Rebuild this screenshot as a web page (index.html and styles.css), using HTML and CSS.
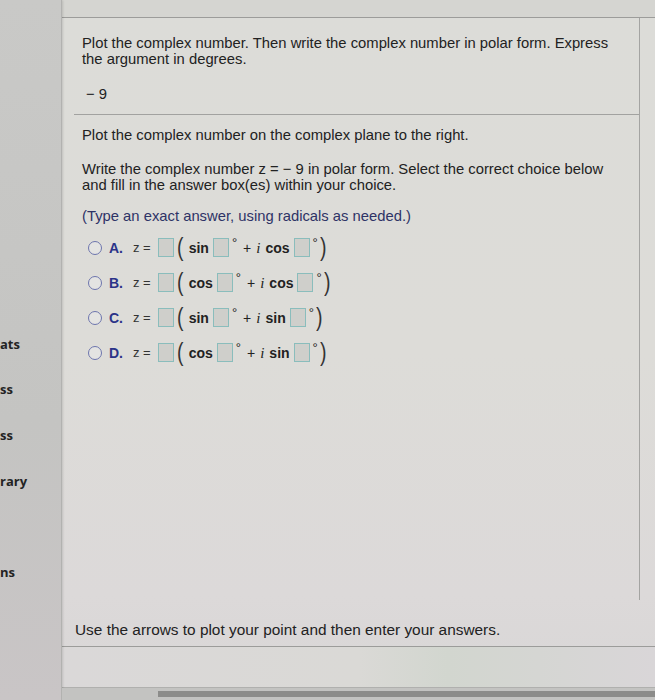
FILE: index.html
```html
<!DOCTYPE html>
<html>
<head>
<meta charset="utf-8">
<link rel="stylesheet" href="styles.css">
</head>
<body>
<div class="page">
  <aside class="sidebar">
    <div class="nav-item n1">ats</div>
    <div class="nav-item n2">ss</div>
    <div class="nav-item n3">ss</div>
    <div class="nav-item n4">rary</div>
    <div class="nav-item n5">ns</div>
  </aside>
  <main class="main">
    <div class="topbar"></div>
    <div class="work">
      <section class="question">
        <div class="header">
          <p class="prompt">Plot the complex number. Then write the complex number in polar form. Express the argument in degrees.</p>
          <p class="given">&minus; 9</p>
        </div>
        <div class="body">
          <p class="p1">Plot the complex number on the complex plane to the right.</p>
          <p class="p2">Write the complex number z = &minus; 9 in polar form. Select the correct choice below and fill in the answer box(es) within your choice.</p>
          <p class="hint">(Type an exact answer, using radicals as needed.)</p>
          <div class="options">
            <div class="opt"><span class="radio"></span><span class="letter">A.</span><span class="z">z =</span><span class="box"></span><span class="paren">(</span><b class="fn">sin</b><span class="box"></span><span class="deg">°</span><span class="plus">+</span><i class="im">i</i><b class="fn">cos</b><span class="box"></span><span class="deg">°</span><span class="paren cl">)</span></div>
            <div class="opt"><span class="radio"></span><span class="letter">B.</span><span class="z">z =</span><span class="box"></span><span class="paren">(</span><b class="fn">cos</b><span class="box"></span><span class="deg">°</span><span class="plus">+</span><i class="im">i</i><b class="fn">cos</b><span class="box"></span><span class="deg">°</span><span class="paren cl">)</span></div>
            <div class="opt"><span class="radio"></span><span class="letter">C.</span><span class="z">z =</span><span class="box"></span><span class="paren">(</span><b class="fn">sin</b><span class="box"></span><span class="deg">°</span><span class="plus">+</span><i class="im">i</i><b class="fn">sin</b><span class="box"></span><span class="deg">°</span><span class="paren cl">)</span></div>
            <div class="opt"><span class="radio"></span><span class="letter">D.</span><span class="z">z =</span><span class="box"></span><span class="paren">(</span><b class="fn">cos</b><span class="box"></span><span class="deg">°</span><span class="plus">+</span><i class="im">i</i><b class="fn">sin</b><span class="box"></span><span class="deg">°</span><span class="paren cl">)</span></div>
          </div>
        </div>
      </section>
      <div class="gutter"></div>
    </div>
    <div class="footer">
      <p>Use the arrows to plot your point and then enter your answers.</p>
    </div>
    <div class="blank"></div>
    <div class="bottom-strip"><span class="tab"></span></div>
  </main>
</div>
</body>
</html>
```

FILE: styles.css
```css
* { box-sizing: border-box; }
html, body { margin: 0; padding: 0; }
body {
  width: 655px;
  height: 700px;
  overflow: hidden;
  background: #c7c7c5;
  font-family: "Liberation Sans", Arial, sans-serif;
  color: #222;
}
p { margin: 0; }
.page {
  display: flex;
  height: 700px;
}
.sidebar {
  width: 62px;
  flex: none;
  background: linear-gradient(180deg, #c9c9c7 0%, #c4c4c2 60%, #c9c5c6 100%);
  border-right: 1px solid #b2b2b0;
  box-shadow: 1px 0 2px rgba(0,0,0,0.12);
  position: relative;
  font-family: "Open Sans", "Liberation Sans", sans-serif;
  font-weight: 700;
  font-size: 13px;
  color: #232323;
}
.nav-item {
  position: absolute;
  left: 0;
  line-height: 16px;
}
.n1 { top: 336px; }
.n2 { top: 381px; }
.n3 { top: 427px; }
.n4 { top: 473px; }
.n5 { top: 564px; }
.main {
  flex: 1;
  display: flex;
  flex-direction: column;
  background: linear-gradient(180deg, #dcdcd8 0%, #dddcd8 50%, #dcd9d9 85%, #d8d6d6 100%);
}
.topbar {
  height: 18px;
  flex: none;
  background: #d5d5d1;
  border-bottom: 1px solid #9c9c9a;
}
.work {
  display: flex;
  height: 582px;
  flex: none;
}
.question {
  flex: 1;
  border-right: 1px solid #a4a4a2;
  padding-left: 12px;
}
.gutter {
  width: 15px;
  flex: none;
}
.header {
  border-bottom: 1px solid #a2a2a0;
  padding: 17px 0 12px 8px;
}
.prompt {
  font-size: 14.8px;
  line-height: 16px;
  width: 545px;
}
.given {
  margin-top: 19px;
  padding-left: 4px;
  font-size: 14.8px;
  line-height: 16px;
}
.body {
  padding-left: 8px;
  font-size: 14.8px;
  line-height: 16px;
}
.p1 { margin-top: 12px; }
.p2 { margin-top: 18px; width: 528px; }
.hint { margin-top: 15px; color: #2e3366; }
.options {
  margin-top: 6px;
  display: flex;
  flex-direction: column;
}
.opt {
  height: 35px;
  display: flex;
  align-items: center;
  font-size: 14px;
}
.radio {
  width: 14px;
  height: 14px;
  border: 1.6px solid #6d75ad;
  border-radius: 50%;
  margin-left: 6px;
  background: #e4e4e2;
}
.letter {
  margin-left: 7px;
  font-weight: 700;
  color: #2b3388;
  width: 24px;
}
.z {
  font-size: 13px;
  width: 25px;
  color: #333;
}
.box {
  width: 16px;
  height: 19px;
  background: #cfcfcb;
  border: 1.5px solid #8abdbc;
  flex: none;
}
.paren {
  font-size: 26px;
  font-weight: 300;
  line-height: 20px;
  margin: 0 3px 2px 2px;
  transform: scaleX(0.75);
  color: #333;
}
.paren.cl { margin-left: 1px; }
.fn {
  font-weight: 700;
  margin-right: 4px;
}
.fn:first-of-type { margin-left: 1px; }
.deg {
  font-size: 13px;
  align-self: flex-start;
  margin-top: 5px;
  margin-left: 3px;
}
.plus { margin: 0 5px 0 6px; }
.im {
  font-family: "Liberation Serif", serif;
  margin-right: 5px;
  font-size: 15px;
}
.footer {
  height: 47px;
  flex: none;
  border-bottom: 1px solid #9c9c9a;
  padding: 22px 0 0 13px;
  font-size: 15.4px;
  line-height: 16px;
}
.blank {
  flex: 1;
  background: linear-gradient(90deg, #dad8d8 0%, #dad9d6 50%, #d2d6cf 65%, #d9d6d8 100%);
  border-bottom: 1px solid #b0b0ae;
}
.bottom-strip {
  height: 12px;
  flex: none;
  background: #c3c3c1;
  position: relative;
}
.tab {
  position: absolute;
  left: 96px;
  right: 0;
  top: 3px;
  height: 6px;
  background: #8c8c8a;
}
```
